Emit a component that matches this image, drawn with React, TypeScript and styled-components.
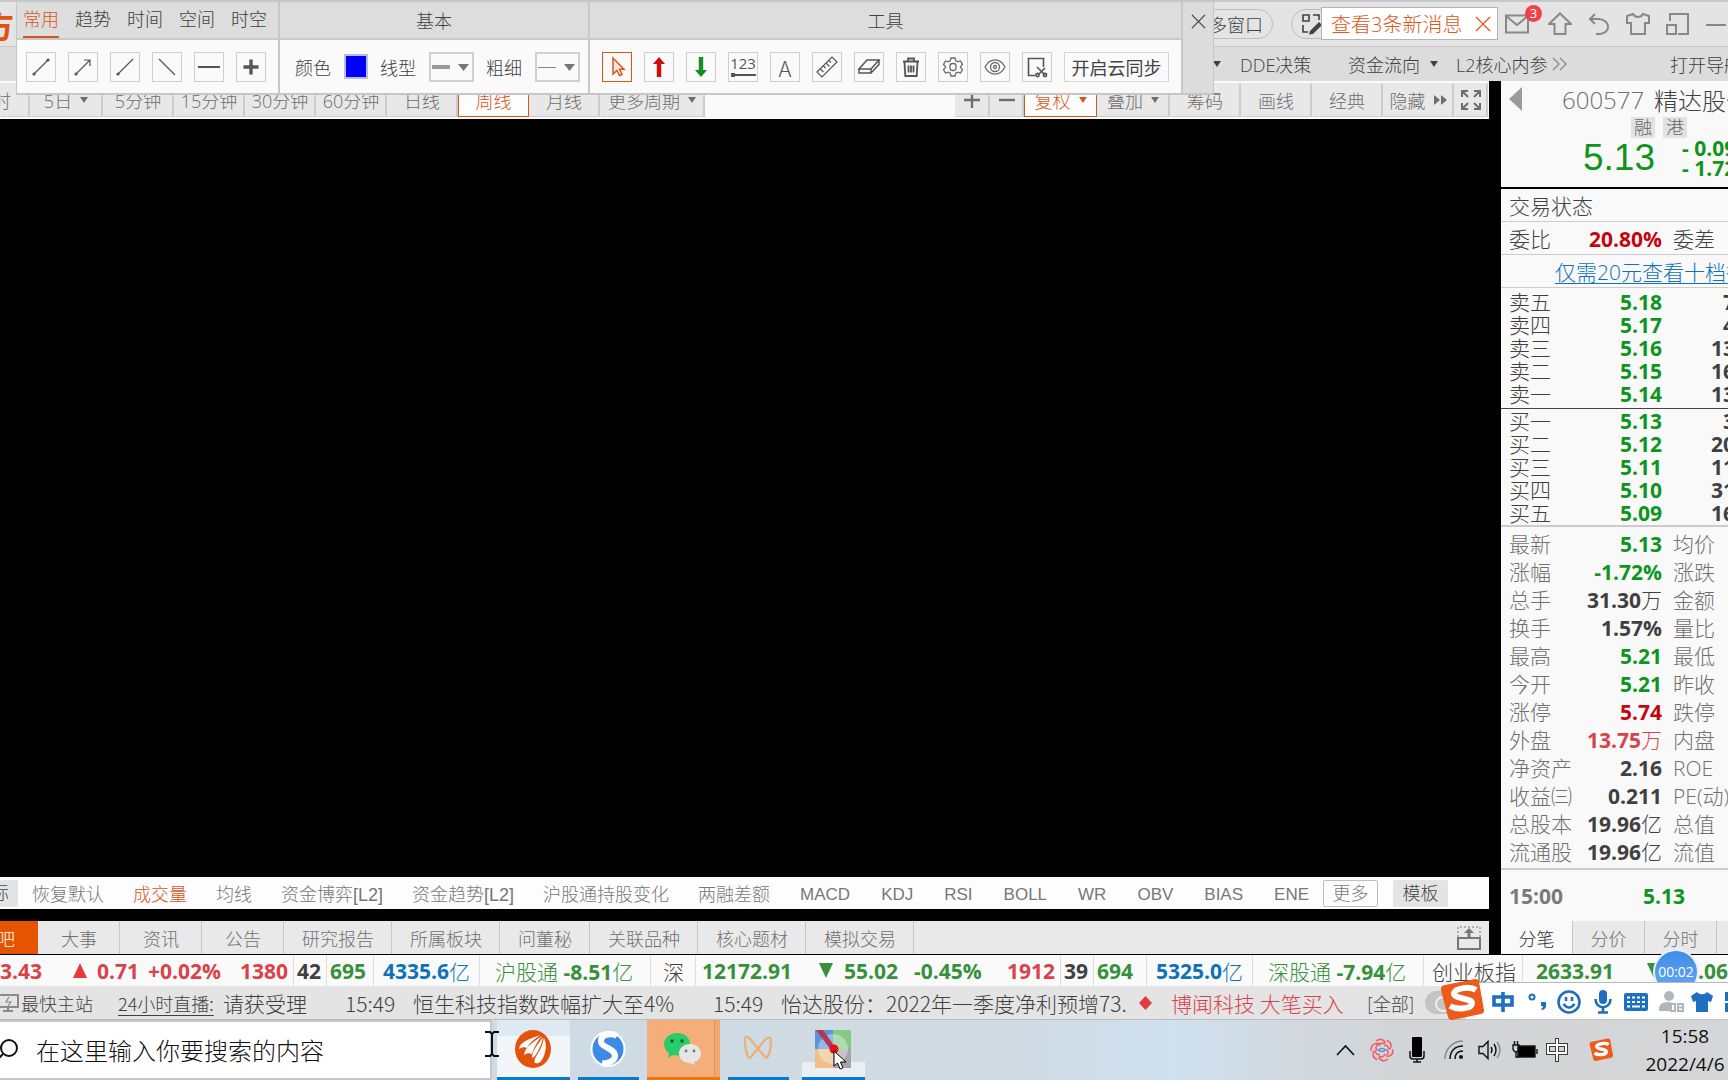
import React from "react";
import styled, { createGlobalStyle, css } from "styled-components";

const ui = '"Open Sans", "Noto Sans CJK SC", sans-serif';
const cjk = '"Noto Sans CJK SC", sans-serif';
const arial = '"Liberation Sans", "Noto Sans CJK SC", sans-serif';

const c = {
  orange: "#d4581c",
  green: "#0f9420",
  red: "#c4060f",
  softRed: "#d8434a",
  softGreen: "#37903b",
  blue: "#0f72b8",
  text: "#404040",
  muted: "#707070",
  line: "#cccccc",
  panel: "#f9f9f9",
};

const Global = createGlobalStyle`
  * { box-sizing: border-box; }
  body { margin: 0; background: #000; overflow: hidden; }
  button, input, select { font: inherit; color: inherit; margin: 0; padding: 0; border: 0; background: none; }
  button { white-space: nowrap; cursor: pointer; }
  svg { display: block; flex: none; }
  table { border-collapse: collapse; border-spacing: 0; }
  td, th { padding: 0; font-weight: inherit; text-align: left; }
`;

const Screen = styled.div`
  position: relative;
  display: flex;
  flex-direction: column;
  height: 100vh;
  overflow: hidden;
  font-family: ${ui};
  font-size: 18px;
  font-weight: 300;
  color: ${c.text};
  white-space: nowrap;
`;

/* ---------- title bar and menu ---------- */

const TitleBar = styled.header`
  display: flex;
  align-items: center;
  height: 46px;
  flex: none;
  border-top: 2px solid #c8c8c8;
  background: #e4e4e4;
  overflow: hidden;
`;
const Brand = styled.div`
  width: 14px;
  display: flex;
  justify-content: flex-end;
  font-family: ${cjk};
  font-weight: 700;
  font-size: 32px;
  line-height: 44px;
  color: #e05410;
`;
const TitleTools = styled.div`
  display: flex;
  align-items: center;
  margin-left: auto;
`;
const Pill = styled.button<{ $w: number }>`
  display: flex;
  align-items: center;
  justify-content: flex-end;
  width: ${(p) => p.$w}px;
  height: 30px;
  margin-right: 18px;
  padding: 0 9px;
  border: 1px solid #bdbdbd;
  border-radius: 15px;
`;
const LayoutPill = styled(Pill)`
  justify-content: flex-start;
  margin-right: 0;
`;
const WindowIcons = styled.div`
  display: flex;
  align-items: center;
  gap: 15px;
  margin-left: 14px;
`;
const IconButton = styled.button`
  position: relative;
  display: grid;
  place-items: center;
  width: 24px;
  height: 30px;
`;
const MailButton = styled(IconButton)`
  margin-right: 4px;
`;
const Badge = styled.span`
  position: absolute;
  left: 20px;
  top: -4px;
  width: 17px;
  height: 17px;
  border-radius: 50%;
  background: #ef4146;
  color: #fff;
  font-size: 13px;
  font-weight: 400;
  line-height: 17px;
  text-align: center;
`;
const Notice = styled.div`
  position: absolute;
  top: 7px;
  right: 230px;
  display: flex;
  align-items: center;
  justify-content: space-between;
  width: 177px;
  height: 33px;
  padding: 0 6px 0 9px;
  border: 1px solid #b4b4b4;
  background: #fff;
  color: #e0571a;
  font-size: 20px;
`;
const MenuBar = styled.nav`
  display: flex;
  align-items: center;
  justify-content: flex-end;
  height: 35px;
  flex: none;
  border-top: 1px solid #c9c9c9;
  background: #dcdcdc;
  overflow: hidden;
`;
const MenuItem = styled.a<{ $w: number }>`
  display: flex;
  align-items: center;
  gap: 10px;
  flex: none;
  width: ${(p) => p.$w}px;
  color: inherit;
  text-decoration: none;
`;
const MoreItem = styled(MenuItem)`
  gap: 4px;
`;

/* ---------- main area ---------- */

const Main = styled.main`
  display: grid;
  grid-template-columns: minmax(0, 1fr) 227px;
  column-gap: 12px;
  flex: 1;
  min-height: 0;
  background: #000;
`;
const Left = styled.section`
  display: flex;
  flex-direction: column;
  min-width: 0;
`;
const PeriodRow = styled.div`
  display: flex;
  height: 38px;
  flex: none;
  padding: 2px 1px 2px 0;
  background: #fafafa;
  overflow: hidden;
`;
const Spacer = styled.div`
  flex: 1;
`;
const Period = styled.button<{ $w: number; $on?: boolean; $cut?: boolean }>`
  display: flex;
  align-items: center;
  justify-content: ${(p) => (p.$cut ? "flex-end" : "center")};
  gap: 8px;
  width: ${(p) => p.$w}px;
  flex: none;
  padding-right: ${(p) => (p.$cut ? 17 : 0)}px;
  border: 1px solid ${(p) => (p.$on ? c.orange : "#e8e8e8")};
  border-right: ${(p) => (p.$on ? `1px solid ${c.orange}` : `2px solid ${c.line}`)};
  border-bottom-color: ${(p) => (p.$on ? c.orange : c.line)};
  background: ${(p) => (p.$on ? "#fdfdfd" : "#e8e8e8")};
  color: ${(p) => (p.$on ? c.orange : "#6e6e6e")};
`;
const Chart = styled.div`
  flex: 1;
  background: #000;
`;
const Indicators = styled.div`
  display: flex;
  align-items: center;
  gap: 29px;
  height: 32px;
  flex: none;
  margin-bottom: 12px;
  background: #fdfdfd;
  color: #777;
  overflow: hidden;
`;
const Indicator = styled.button<{ $on?: boolean; $latin?: boolean }>`
  padding: ${(p) => (p.$latin ? "3px 1px 0" : "0")};
  font-family: ${arial};
  font-size: ${(p) => (p.$latin ? 17 : 18)}px;
  color: ${(p) => (p.$on ? c.orange : "inherit")};
`;
const Chip = styled.button<{ $fill?: boolean }>`
  width: 55px;
  height: 27px;
  margin-left: ${(p) => (p.$fill ? -14 : -16)}px;
  border: 1px solid ${(p) => (p.$fill ? "#e4e4e4" : "#bdbdbd")};
  border-radius: 2px;
  background: ${(p) => (p.$fill ? "#e4e4e4" : "transparent")};
  color: ${(p) => (p.$fill ? "#444" : "inherit")};
  line-height: 25px;
`;
const CutChip = styled.button`
  display: flex;
  justify-content: flex-end;
  width: 18px;
  height: 27px;
  margin-right: -15px;
  padding-right: 9px;
  background: #e4e4e4;
  line-height: 25px;
  color: #444;
  overflow: hidden;
`;
const InfoTabs = styled.div`
  display: flex;
  align-items: center;
  height: 33px;
  flex: none;
  padding-right: 8px;
  background: #e9e9e9;
  overflow: hidden;
`;
const InfoTab = styled.button`
  min-width: 82px;
  height: 33px;
  padding: 0 17px 0 18px;
  border-right: 1px solid #c8c8c8;
  color: ${c.muted};
`;
const ActiveTab = styled.button`
  display: flex;
  justify-content: flex-end;
  align-items: center;
  width: 38px;
  height: 33px;
  padding-right: 23px;
  background: #e65400;
  color: #fff;
`;

/* ---------- quote panel ---------- */

const Panel = styled.aside`
  display: flex;
  flex-direction: column;
  min-width: 0;
  background: ${c.panel};
  font-size: 21px;
  overflow: hidden;
`;
const QuoteHead = styled.div`
  height: 108px;
  flex: none;
  padding-left: 8px;
  border-bottom: 2px solid #000;
`;
const StockLine = styled.div`
  display: flex;
  align-items: center;
  height: 36px;
  font-size: 24px;
`;
const StockCode = styled.span`
  flex: none;
  width: 92px;
  margin-left: 40px;
  color: #707070;
`;
const TagLine = styled.div`
  display: flex;
  gap: 8px;
  padding-left: 122px;
`;
const Tag = styled.span`
  width: 24px;
  height: 21px;
  background: #e2e2e2;
  color: #666;
  font-size: 18px;
  line-height: 20px;
  text-align: center;
`;
const PriceLine = styled.div`
  display: flex;
  align-items: center;
  padding-left: 74px;
  color: ${c.green};
`;
const Price = styled.span`
  flex: none;
  width: 99px;
  font-family: ${arial};
  font-size: 37px;
  font-weight: 400;
  line-height: 40px;
`;
const Change = styled.span`
  font-weight: 700;
  line-height: 20px;
`;
const PanelRow = styled.div`
  display: flex;
  height: 33px;
  flex: none;
  padding-left: 8px;
  border-bottom: 1px solid ${c.line};
  line-height: 34px;
`;
const DeepLink = styled.a`
  margin-left: 46px;
  color: ${c.blue};
  text-underline-offset: 3px;
  text-decoration-thickness: 1px;
`;
const Table = styled.table<{ $row: number }>`
  table-layout: fixed;
  width: 226px;
  flex: none;
  tr { height: ${(p) => p.$row}px; }
  th, td { line-height: ${(p) => p.$row}px; vertical-align: top; }
`;
const NameCol = styled.col`
  width: 62px;
`;
const PriceCol = styled.col`
  width: 91px;
`;
const Label = styled.th<{ $muted?: boolean }>`
  color: ${(p) => (p.$muted ? c.muted : c.text)};
`;
const Second = styled(Label)`
  && { padding-left: 11px; }
`;
const Value = styled.td<{ $tone: string }>`
  && { text-align: right; }
  color: ${(p) => p.$tone};
  font-weight: 700;
`;
const Unit = styled.span`
  font-weight: 300;
  line-height: 20px;
`;
const Block = styled.div<{ $h: number; $rule: string; $thick: number }>`
  height: ${(p) => p.$h}px;
  flex: none;
  padding: 3px 0 0 8px;
  border-bottom: ${(p) => p.$thick}px solid ${(p) => p.$rule};
`;
const BuyBlock = styled(Block)`
  padding-top: 1px;
`;
const Deal = styled.div`
  display: flex;
  align-items: center;
  flex: 1;
  padding-left: 8px;
  font-weight: 700;
  color: #7a7a7a;
`;
const DealPrice = styled.span`
  margin-left: 80px;
  color: ${c.green};
`;
const DealTabs = styled.div`
  display: flex;
  height: 33px;
  flex: none;
`;
const DealTab = styled.button<{ $on?: boolean }>`
  width: 72px;
  flex: none;
  border-right: 1px solid #c4c4c4;
  background: ${(p) => (p.$on ? c.panel : "#e9e9e9")};
  color: ${(p) => (p.$on ? "#333" : c.muted)};
  font-size: 18px;
`;

/* ---------- index ticker and news ---------- */

const Ticker = styled.div`
  display: flex;
  height: 32px;
  flex: none;
  border-top: 1px solid #000;
  background: #fafafa;
  font-size: 21px;
  overflow: hidden;
`;
const Tick = styled.span<{ $w: number; $pad?: number; $tone?: string; $rule?: boolean }>`
  display: flex;
  align-items: center;
  flex: none;
  width: ${(p) => p.$w}px;
  padding-left: ${(p) => p.$pad ?? 0}px;
  border-right: ${(p) => (p.$rule ? "1px solid #ddd" : "0")};
  color: ${(p) => p.$tone ?? c.text};
`;
const Num = styled.b`
  font-weight: 700;
`;
const News = styled.div`
  display: flex;
  align-items: center;
  height: 34px;
  flex: none;
  border-bottom: 1px solid #bbb;
  background: #e4e4e4;
  font-family: ${cjk};
  overflow: hidden;
`;
const NewsCell = styled.span<{ $w: number; $big?: boolean; $tone?: string }>`
  flex: none;
  width: ${(p) => p.$w}px;
  font-size: ${(p) => (p.$big ? 21 : 18)}px;
  color: ${(p) => p.$tone ?? c.text};
`;
const LiveLink = styled.a`
  color: inherit;
  text-underline-offset: 4px;
  text-decoration-thickness: 1px;
`;
const Toggle = styled.span`
  width: 40px;
  height: 23px;
  border-radius: 12px;
  background: #c4c4c4;
  padding: 5px 10px;
  &::before {
    content: "";
    display: block;
    width: 12px;
    height: 12px;
    border: 2px solid #eee;
    border-radius: 50%;
  }
`;

/* ---------- taskbar ---------- */

const Taskbar = styled.footer`
  display: flex;
  align-items: stretch;
  height: 60px;
  flex: none;
  background: linear-gradient(90deg, #cfdde6 0, #cfdbe4 40%, #d0dae3 58%, #cfe0ee 68%, #d2d8dd 76%, #d3d4d5 84%, #d5d6d7 100%);
  overflow: hidden;
`;
const Search = styled.label`
  display: flex;
  align-items: center;
  gap: 12px;
  width: 492px;
  flex: none;
  border: 2px solid #c4c8ca;
  border-left: 0;
  background: #fff;
  color: #222;
`;
const SearchInput = styled.input`
  flex: 1;
  min-width: 0;
  outline: 0;
  font-size: 24px;
  font-weight: 300;
  margin-left: 6px;
  &::placeholder { color: #111; opacity: 1; }
`;
const Tasks = styled.div`
  display: flex;
  gap: 8px;
  margin-left: 5px;
`;
const Task = styled.button<{ $w: number; $kind?: "light" | "hot" | "low" }>`
  display: grid;
  place-items: center;
  width: ${(p) => p.$w}px;
  padding-right: 2px;
  border-bottom: 3px solid ${(p) => (p.$kind === "hot" ? "#ec7612" : "#0b79c9")};
  ${(p) => p.$kind === "light" && css`background: linear-gradient(#dfe9f1 16px, #f2f6f9 16px);`}
  ${(p) => p.$kind === "hot" && css`background: linear-gradient(90deg, #f4ae79 67px, #d99460 67px, #d99460 68px, #f2a76e 68px);`}
  ${(p) => p.$kind === "low" && css`margin-left: 5px; background: linear-gradient(transparent 42px, #e9eff5 42px);`}
`;
const Tray = styled.div`
  display: flex;
  align-items: center;
  margin-left: auto;
  color: #111;
`;
const TrayCell = styled.button<{ $w: number }>`
  display: grid;
  place-items: center start;
  width: ${(p) => p.$w}px;
  height: 60px;
`;
const Clock = styled.div`
  width: 86px;
  font-size: 19px;
  font-weight: 400;
  line-height: 28px;
  text-align: center;
  color: #111;
`;
const TimeText = styled.div``;

/* ---------- floating drawing palette ---------- */

const Palette = styled.div`
  position: absolute;
  top: 0;
  left: 16px;
  display: flex;
  height: 95px;
  border: 1px solid #c6c6c6;
  border-top: 2px solid #c6c6c6;
  border-bottom-width: 2px;
  background: #dcdcdc;
`;
const Group = styled.section<{ $w: number }>`
  width: ${(p) => p.$w}px;
  border-right: 2px solid #c8c8c8;
`;
const GroupHead = styled.div`
  display: flex;
  justify-content: center;
  align-items: center;
  height: 38px;
  border-bottom: 2px solid #c8c8c8;
  background: #dcdddc;
`;
const PaletteTabs = styled(GroupHead)`
  justify-content: flex-start;
  gap: 16px;
  padding-left: 6px;
`;
const PaletteTab = styled.button<{ $on?: boolean }>`
  width: 36px;
  height: 36px;
  line-height: 34px;
  border-bottom: 2px solid ${(p) => (p.$on ? c.orange : "transparent")};
  color: ${(p) => (p.$on ? c.orange : c.text)};
`;
const GroupBody = styled.div<{ $gap: number; $pad: number }>`
  display: flex;
  align-items: center;
  gap: ${(p) => p.$gap}px;
  height: 53px;
  padding-left: ${(p) => p.$pad}px;
  background: #fafafa;
`;
const Tool = styled.button<{ $on?: boolean }>`
  display: grid;
  place-items: center;
  width: 30px;
  height: 30px;
  border: 1px solid ${(p) => (p.$on ? c.orange : "#cfcfcf")};
  color: #555;
`;
const SyncButton = styled.button`
  width: 105px;
  height: 30px;
  border: 1px solid #d6d6d6;
  font-weight: 400;
  color: #444;
`;
const ToolField = styled.label`
  display: flex;
  align-items: center;
  gap: 13px;
`;
const ColorInput = styled.input`
  appearance: none;
  width: 24px;
  height: 25px;
  border: 2px solid #b9bcdd;
  &::-webkit-color-swatch-wrapper { padding: 0; }
  &::-webkit-color-swatch { border: 0; border-radius: 0; }
`;
const StyleBox = styled.span`
  display: grid;
  width: 45px;
  height: 30px;
  border: 2px solid #d0d0d0;
  align-items: center;
  & > * { grid-area: 1 / 1; }
`;
const StyleSelect = styled.select`
  appearance: none;
  width: 100%;
  height: 100%;
  color: transparent;
  outline: 0;
  option { color: #333; }
`;
const CloseCell = styled.button`
  display: flex;
  justify-content: center;
  width: 30px;
  padding-top: 12px;
`;

/* ---------- other floating pieces ---------- */

const ImeBar = styled.div`
  position: absolute;
  right: 0;
  bottom: 60px;
  display: flex;
  align-items: center;
  width: 262px;
  height: 38px;
  padding: 2px 0 0 26px;
  border-top: 1px solid #b8b8b8;
  border-bottom: 1px solid #c4c4c4;
  background: #fff;
  color: #1f6fc0;
`;
const ImeCell = styled.button<{ $w: number }>`
  display: grid;
  place-items: center start;
  flex: none;
  width: ${(p) => p.$w}px;
`;
const ImeLogo = styled.div`
  position: absolute;
  left: -26px;
  top: -5px;
`;
const Timer = styled.div`
  position: absolute;
  right: 29px;
  bottom: 85px;
  width: 46px;
  height: 46px;
  border: 2px solid #e8f1fc;
  border-radius: 50%;
  background: linear-gradient(180deg, #3f8ce6, #69a8f4);
  color: #fff;
  font-size: 14px;
  font-weight: 400;
  line-height: 42px;
  text-align: center;
`;
const IBeam = styled.div`
  position: absolute;
  left: 485px;
  bottom: 23px;
`;
const Pointer = styled.div`
  position: absolute;
  left: 833px;
  bottom: 10px;
`;

/* ---------- drawings ---------- */

type DrawProps = { w?: number; h?: number; box?: string; color?: string; sw?: number; children: React.ReactNode };
const Draw = ({ w = 24, h = 24, box, color = "currentColor", sw = 2, children }: DrawProps) => (
  <svg width={w} height={h} viewBox={box ?? `0 0 ${w} ${h}`} fill="none" stroke={color} strokeWidth={sw}>
    {children}
  </svg>
);
const Caret = ({ s = 8 }: { s?: number }) => (
  <svg width={s} height={s - 2} viewBox="0 0 8 6"><path d="M0 0h8L4 6z" fill="currentColor" /></svg>
);
const Cross = ({ s = 16 }: { s?: number }) => (
  <Draw w={s} h={s} box="0 0 16 16" sw={1.3}><path d="M1 1l14 14M15 1L1 15" /></Draw>
);
const SogouS = ({ s }: { s: number }) => (
  <svg width={s} height={s} viewBox="0 0 44 44">
    <path d="M5 7L35 1q3-.5 4 3l5 28q.4 3-3 4L12 42q-3 .5-4-3L1 12q-.6-4 4-5z" fill="#ee5a1a" />
    <path d="M36 12c-6-4-20-2-22 3-1 6 18 5 18 10 0 6-15 7-22 3" fill="none" stroke="#fff" strokeWidth="6" />
  </svg>
);
const Dot = ({ x, y }: { x: number; y: number }) => <circle cx={x} cy={y} r="1.6" fill="currentColor" stroke="none" />;

const lineTools: [string, React.ReactNode][] = [
  ["线段", <Draw w={20} h={20} sw={1.2}><path d="M3 17L17 3" /><Dot x={3} y={17} /><Dot x={17} y={3} /></Draw>],
  ["箭头", <Draw w={20} h={20} sw={1.2}><path d="M3 17L17 3M11 3h6v6" /><Dot x={3} y={17} /></Draw>],
  ["射线", <Draw w={20} h={20} sw={1.2}><path d="M3 17L18 2" /><Dot x={3} y={17} /></Draw>],
  ["直线", <Draw w={20} h={20} sw={1.2}><path d="M2 2l16 16" /></Draw>],
  ["水平线", <Draw w={22} h={20}><path d="M0 10h22" /></Draw>],
  ["十字", <Draw w={20} h={20} sw={3.4}><path d="M2.500 10h15M10 2.500v15" /></Draw>],
];

const drawTools: [string, React.ReactNode][] = [
  ["选择", <Draw w={20} h={24} color={c.orange} sw={1.5}><path d="M6 3v16l4-3.500 2.500 5 2.500-1.200-2.300-5H17z" fill="#fbe6dc" /></Draw>],
  ["上箭头", <svg width="12" height="20" viewBox="0 0 12 20"><path d="M6 0l6 7H8.200v13H3.800V7H0z" fill="#d10a0a" /></svg>],
  ["下箭头", <svg width="12" height="20" viewBox="0 0 12 20"><path d="M6 20l6-7H8.200V0H3.800v13H0z" fill="#128f22" /></svg>],
  ["数字标注", null],
  ["文字", null],
  ["标尺", <Draw w={24} h={24} sw={1.2}><path d="M2 17L17 2l5 5L7 22zM5.500 14l3 3M8.500 11l2 2M11 8l3.500 3.500M14 5.500l2 2" /></Draw>],
  ["橡皮", <Draw w={24} h={24} sw={1.5}><path d="M2 14L10 5h12l-8 9zM2 14v4h12v-4M14 18l8-8.500V5" /></Draw>],
  ["删除", <Draw w={22} h={24} sw={1.8}><path d="M3 6.500h16M8 6V3.500h6V6M4.500 7l.8 14h11.400l.8-14M8.500 10.500v7M11 10.500v7M13.500 10.500v7" /></Draw>],
  ["设置", <Draw w={22} h={22} sw={1.3} color="#6a6a6a"><path d="M9 2h4l.7 2.800 2 1.100L18.500 5l2 3.500-2 2v1l2 2-2 3.500-2.800-.9-2 1.100L13 20H9l-.7-2.800-2-1.100-2.800.9-2-3.500 2-2v-1l-2-2 2-3.500 2.800.9 2-1.100z" /><rect x="8" y="7.500" width="6" height="7" rx="2.500" /></Draw>],
  ["显示", <Draw w={22} h={20} sw={1.3} color="#6a6a6a"><path d="M1 10c5-9.500 15-9.500 20 0-5 9.500-15 9.500-20 0z" /><circle cx="11" cy="10" r="4.500" /><circle cx="11" cy="10" r="1.500" /></Draw>],
  ["截图", <Draw w={22} h={22} sw={1.6}><path d="M9 19.500H2.500v-17h15V11M11 11l8 8M19 12l-7 7" /><circle cx="11.500" cy="19" r="1.600" /><circle cx="19" cy="19" r="1.600" /></Draw>],
];

const Numbering = styled.span`
  display: grid;
  justify-items: center;
  font-size: 15px;
  font-weight: 400;
  line-height: 17px;
`;
const Letter = styled.span`
  font-family: ${cjk};
  font-size: 22px;
  line-height: 28px;
`;

const periods: [string, number, boolean?, boolean?][] = [
  ["5日", 73, false, true], ["5分钟", 71], ["15分钟", 71], ["30分钟", 71], ["60分钟", 71],
  ["日线", 71], ["周线", 71, true], ["月线", 71], ["更多周期", 105, false, true],
];
const indicators = ["恢复默认", "成交量", "均线", "资金博弈[L2]", "资金趋势[L2]", "沪股通持股变化", "两融差额"];
const latin = ["MACD", "KDJ", "RSI", "BOLL", "WR", "OBV", "BIAS", "ENE"];
const infoTabs = ["大事", "资讯", "公告", "研究报告", "所属板块", "问董秘", "关联品种", "核心题材", "模拟交易"];

const sells = [["卖五", "5.18", "7"], ["卖四", "5.17", "4"], ["卖三", "5.16", "13"], ["卖二", "5.15", "16"], ["卖一", "5.14", "13"]];
const buys = [["买一", "5.13", "3"], ["买二", "5.12", "20"], ["买三", "5.11", "11"], ["买四", "5.10", "31"], ["买五", "5.09", "16"]];
const stats: [string, string, string, string, string][] = [
  ["最新", "5.13", "", c.green, "均价"],
  ["涨幅", "-1.72%", "", c.green, "涨跌"],
  ["总手", "31.30", "万", c.text, "金额"],
  ["换手", "1.57%", "", c.text, "量比"],
  ["最高", "5.21", "", c.green, "最低"],
  ["今开", "5.21", "", c.green, "昨收"],
  ["涨停", "5.74", "", c.red, "跌停"],
  ["外盘", "13.75", "万", c.softRed, "内盘"],
  ["净资产", "2.16", "", c.text, "ROE"],
  ["收益㈢", "0.211", "", c.text, "PE(动)"],
  ["总股本", "19.96", "亿", c.text, "总值"],
  ["流通股", "19.96", "亿", c.text, "流值"],
];

const Columns = () => (
  <colgroup><NameCol /><PriceCol /><col /></colgroup>
);

const Depth = ({ rows }: { rows: string[][] }) => (
  <Table $row={23}>
    <Columns />
    <tbody>
      {rows.map(([n, p, v]) => (
        <tr key={n}>
          <Label scope="row">{n}</Label>
          <Value $tone={c.green}>{p}</Value>
          <Value $tone={c.text}>{v}</Value>
        </tr>
      ))}
    </tbody>
  </Table>
);

const DrawingPalette = () => (
  <Palette>
    <Group $w={263}>
      <PaletteTabs>
        {["常用", "趋势", "时间", "空间", "时空"].map((t, i) => <PaletteTab key={t} $on={i === 0}>{t}</PaletteTab>)}
      </PaletteTabs>
      <GroupBody $gap={12} $pad={9}>
        {lineTools.map(([n, icon]) => <Tool key={n} aria-label={n}>{icon}</Tool>)}
      </GroupBody>
    </Group>
    <Group $w={310}>
      <GroupHead>基本</GroupHead>
      <GroupBody $gap={12} $pad={15}>
        <ToolField>颜色<ColorInput type="color" defaultValue="#0000ff" /></ToolField>
        <ToolField>
          线型
          <StyleBox>
            <Draw w={41} h={26}><path d="M1 13h18" stroke="#999" strokeWidth="4" /><path d="M27 10h11l-5.500 7z" fill="#777" stroke="none" /></Draw>
            <StyleSelect aria-label="线型"><option>实线</option></StyleSelect>
          </StyleBox>
        </ToolField>
        <ToolField>
          粗细
          <StyleBox>
            <Draw w={41} h={26}><path d="M1 13.500h18" stroke="#888" strokeWidth="1" /><path d="M27 10h11l-5.500 7z" fill="#777" stroke="none" /></Draw>
            <StyleSelect aria-label="粗细"><option>1</option></StyleSelect>
          </StyleBox>
        </ToolField>
      </GroupBody>
    </Group>
    <Group $w={593}>
      <GroupHead>工具</GroupHead>
      <GroupBody $gap={12} $pad={12}>
        {drawTools.map(([n, icon], i) => (
          <Tool key={n} $on={i === 0} aria-label={n}>
            {n === "数字标注" ? (
              <Numbering>
                123
                <Draw w={26} h={6}><path d="M2 3h24" /><rect x="1" y="1" width="4" height="4" fill="currentColor" stroke="none" /></Draw>
              </Numbering>
            ) : n === "文字" ? <Letter>A</Letter> : icon}
          </Tool>
        ))}
        <SyncButton>开启云同步</SyncButton>
      </GroupBody>
    </Group>
    <CloseCell aria-label="关闭工具"><Cross s={15} /></CloseCell>
  </Palette>
);

const QuotePanel = () => (
  <Panel>
    <QuoteHead>
      <StockLine>
        <svg width="13" height="24" viewBox="0 0 13 24"><path d="M13 0v24L0 12z" fill="#9b9b9b" /></svg>
        <StockCode>600577</StockCode>
        <span>精达股份</span>
      </StockLine>
      <TagLine><Tag>融</Tag><Tag>港</Tag></TagLine>
      <PriceLine>
        <Price>5.13</Price>
        <Change>- 0.09<br />- 1.72%</Change>
      </PriceLine>
    </QuoteHead>
    <PanelRow>交易状态</PanelRow>
    <PanelRow>
      <Table $row={34}>
        <Columns />
        <tbody>
          <tr>
            <Label scope="row">委比</Label>
            <Value $tone={c.red}>20.80%</Value>
            <Second>委差</Second>
          </tr>
        </tbody>
      </Table>
    </PanelRow>
    <PanelRow><DeepLink href="#depth">仅需20元查看十档行情</DeepLink></PanelRow>
    <Block $h={121} $rule="#444" $thick={1}><Depth rows={sells} /></Block>
    <BuyBlock $h={118} $rule={c.line} $thick={2}><Depth rows={buys} /></BuyBlock>
    <Block $h={343} $rule={c.line} $thick={2}>
      <Table $row={28}>
        <Columns />
        <tbody>
          {stats.map(([n, v, u, tone, second]) => (
            <tr key={n}>
              <Label scope="row" $muted>{n}</Label>
              <Value $tone={tone}>{v}{u && <Unit>{u}</Unit>}</Value>
              <Second $muted>{second}</Second>
            </tr>
          ))}
        </tbody>
      </Table>
    </Block>
    <Deal>15:00<DealPrice>5.13</DealPrice></Deal>
    <DealTabs>
      <DealTab $on>分笔</DealTab><DealTab>分价</DealTab><DealTab>分时</DealTab><DealTab aria-label="更多" />
    </DealTabs>
  </Panel>
);

const Up = () => <svg width="14" height="15" viewBox="0 0 14 15"><path d="M7 0l7 15H0z" fill="currentColor" /></svg>;
const Down = () => <svg width="14" height="15" viewBox="0 0 14 15"><path d="M7 15l7-15H0z" fill="currentColor" /></svg>;

const IndexTicker = () => (
  <Ticker>
    <Tick $w={73} $tone={c.softRed}><Num>3.43</Num></Tick>
    <Tick $w={24} $tone="#e23c40"><Up /></Tick>
    <Tick $w={51} $tone={c.softRed}><Num>0.71</Num></Tick>
    <Tick $w={92} $tone={c.softRed}><Num>+0.02%</Num></Tick>
    <Tick $w={54} $tone={c.softRed} $rule><Num>1380</Num></Tick>
    <Tick $w={33} $pad={3} $rule><Num>42</Num></Tick>
    <Tick $w={47} $pad={3} $tone={c.softGreen} $rule><Num>695</Num></Tick>
    <Tick $w={106} $pad={9} $tone={c.blue} $rule><Num>4335.6</Num>亿</Tick>
    <Tick $w={171} $pad={15} $tone={c.softGreen} $rule><span>沪股通 <Num>-8.51</Num>亿</span></Tick>
    <Tick $w={45} $pad={12} $rule>深</Tick>
    <Tick $w={123} $pad={6} $tone={c.softGreen}><Num>12172.91</Num></Tick>
    <Tick $w={25} $tone={c.softGreen}><Down /></Tick>
    <Tick $w={70} $tone={c.softGreen}><Num>55.02</Num></Tick>
    <Tick $w={93} $tone={c.softGreen}><Num>-0.45%</Num></Tick>
    <Tick $w={54} $tone={c.softRed} $rule><Num>1912</Num></Tick>
    <Tick $w={33} $pad={3} $rule><Num>39</Num></Tick>
    <Tick $w={53} $pad={3} $tone={c.softGreen} $rule><Num>694</Num></Tick>
    <Tick $w={106} $pad={9} $tone={c.blue} $rule><Num>5325.0</Num>亿</Tick>
    <Tick $w={171} $pad={15} $tone={c.softGreen} $rule><span>深股通 <Num>-7.94</Num>亿</span></Tick>
    <Tick $w={99} $pad={8} $rule>创业板指</Tick>
    <Tick $w={124} $pad={13} $tone={c.softGreen}><Num>2633.91</Num></Tick>
    <Tick $w={51} $tone={c.softGreen}><Down /></Tick>
    <Tick $w={40} $tone={c.softGreen}><Num>.06</Num></Tick>
  </Ticker>
);

export default function App() {
  return (
    <Screen>
      <Global />
      <TitleBar>
        <Brand>方</Brand>
        <TitleTools>
          <Pill $w={72}>多窗口</Pill>
          <LayoutPill $w={200} aria-label="布局">
            <Draw w={24} h={22} sw={1.6}><path d="M2 2h6v6H2zM12 2h6v5M2 12v7h5" /><path d="M9 18l9-9 3 3-9 9-4 .6z" fill="#444" stroke="none" /></Draw>
          </LayoutPill>
          <WindowIcons>
            <MailButton aria-label="邮件">
              <Draw color="#888"><path d="M1 3.500h22v17H1zM1 4l11 9L23 4" /></Draw>
              <Badge>3</Badge>
            </MailButton>
            <IconButton aria-label="主页"><Draw color="#888"><path d="M12 1.500L23 12h-5.500v10h-11V12H1z" /></Draw></IconButton>
            <IconButton aria-label="返回"><Draw color="#888"><path d="M8 2L3 7l5 5M3 7h9c12 1 12 15 0 15H9" /></Draw></IconButton>
            <IconButton aria-label="换肤"><Draw color="#888"><path d="M7 2L1 4v7h4v11h14V11h4V4l-6-2c-2 4-8 4-10 0z" /></Draw></IconButton>
            <IconButton aria-label="窗口大小"><Draw color="#888"><path d="M5 9V2h18v20H13M2 13h9v9H2z" /></Draw></IconButton>
            <IconButton aria-label="最小化"><Draw color="#888"><path d="M2 13h20" /></Draw></IconButton>
          </WindowIcons>
        </TitleTools>
      </TitleBar>
      <MenuBar>
        <MenuItem href="#more" $w={27}><Caret /></MenuItem>
        <MenuItem href="#dde" $w={108}>DDE决策</MenuItem>
        <MenuItem href="#flow" $w={108}>资金流向<Caret /></MenuItem>
        <MoreItem href="#l2" $w={214}>
          <span>L2核心内参</span>
          <Draw w={16} h={14} color="#888" sw={1.3}><path d="M1 1l6 6-6 6M8 1l6 6-6 6" /></Draw>
        </MoreItem>
        <MenuItem href="#nav" $w={58}>打开导航</MenuItem>
      </MenuBar>

      <Main>
        <Left>
          <PeriodRow>
            <Period $w={30} $cut>时</Period>
            {periods.map(([t, w, on, drop]) => <Period key={t} $w={w} $on={on}>{t}{drop && <Caret />}</Period>)}
            <Spacer />
            <Period $w={35} aria-label="放大"><Draw w={18} h={18} sw={2.4}><path d="M1 9h16M9 1v16" /></Draw></Period>
            <Period $w={34} aria-label="缩小"><Draw w={18} h={18} sw={2.4}><path d="M1 9h16" /></Draw></Period>
            <Period $w={73} $on>复权<Caret /></Period>
            <Period $w={73}>叠加<Caret /></Period>
            <Period $w={71}>筹码</Period>
            <Period $w={71}>画线</Period>
            <Period $w={71}>经典</Period>
            <Period $w={71}>隐藏<Draw w={13} h={10}><path d="M0 0l6 5-6 5zM7 0l6 5-6 5z" fill="currentColor" stroke="none" /></Draw></Period>
            <Period $w={34} aria-label="全屏">
              <Draw w={22} h={22}><path d="M2 8V2h6M14 2h6v6M20 14v6h-6M8 20H2v-6M2 2l6 6M20 2l-6 6M20 20l-6-6M2 20l6-6" /></Draw>
            </Period>
          </PeriodRow>
          <Chart />
          <Indicators>
            <CutChip>指标</CutChip>
            {indicators.map((t) => <Indicator key={t} $on={t === "成交量"}>{t}</Indicator>)}
            {latin.map((t) => <Indicator key={t} $latin>{t}</Indicator>)}
            <Chip>更多</Chip>
            <Chip $fill>模板</Chip>
          </Indicators>
          <InfoTabs>
            <ActiveTab>股吧</ActiveTab>
            {infoTabs.map((t) => <InfoTab key={t}>{t}</InfoTab>)}
            <Spacer />
            <Draw w={24} h={24} color="#777"><path d="M1 12h22v11H1z" /><path d="M1 11V1h22v10" strokeWidth="1" strokeDasharray="2 2" /><path d="M12 12V5" strokeWidth="3" /><path d="M7 7l5-5 5 5z" fill="#777" stroke="none" /></Draw>
          </InfoTabs>
        </Left>
        <QuotePanel />
      </Main>

      <IndexTicker />
      <News>
        <NewsCell $w={21}><Draw w={19} h={19} color="#8a8a8a"><path d="M-2 2h20v12H-2zM8 14v3M3 18h10" /><path d="M9 4L6 9h5l-3 4" strokeWidth="1.200" /></Draw></NewsCell>
        <NewsCell $w={97}>最快主站</NewsCell>
        <NewsCell $w={105}><LiveLink href="#live">24小时直播:</LiveLink></NewsCell>
        <NewsCell $w={122} $big>请获受理</NewsCell>
        <NewsCell $w={68} $big>15:49</NewsCell>
        <NewsCell $w={300} $big>恒生科技指数跌幅扩大至4%</NewsCell>
        <NewsCell $w={68} $big>15:49</NewsCell>
        <NewsCell $w={358} $big>怡达股份：2022年一季度净利预增73.</NewsCell>
        <NewsCell $w={32}><Draw w={13} h={14}><path d="M6.500 0L13 7l-6.500 7L0 7z" fill="#e23c40" stroke="none" /></Draw></NewsCell>
        <NewsCell $w={196} $big $tone={c.softRed}>博闻科技 大笔买入</NewsCell>
        <NewsCell $w={58}>[全部]</NewsCell>
        <Toggle />
      </News>

      <Taskbar>
        <Search>
          <Draw w={18} h={24} color="#111"><circle cx="9" cy="10" r="8" /><path d="M3 16l-5 5" /></Draw>
          <SearchInput placeholder="在这里输入你要搜索的内容" aria-label="搜索" />
        </Search>
        <Tasks>
          <Task $w={73} $kind="light" aria-label="东方财富">
            <svg width="36" height="38" viewBox="0 0 36 38">
              <ellipse cx="18" cy="19" rx="18" ry="19" fill="#e2540b" />
              <path d="M4 19C5 12 12 10 25 5 20 9 15 12 12 18c-2-1-5-1-8 1z" fill="#fff" />
              <path d="M9 25c1-8 8-12 18-19-5 6-8 11-10 18-3-1-5-1-8 1z" fill="#fff" />
              <path d="M20 33c-2-3 2-8 5-13 2-4 3-8 4-12 3 6 2 14-1 20-2 4-4 6-8 5z" fill="#fff" />
              <path d="M17 28c0-8 6-13 11-21-1 6-3 10-5 14-2 3-3 6-6 7z" fill="#fff" />
            </svg>
          </Task>
          <Task $w={61} aria-label="搜狗浏览器">
            <svg width="36" height="38" viewBox="0 0 36 38">
              <ellipse cx="18" cy="19" rx="17.500" ry="18" fill="#fff" />
              <ellipse cx="18" cy="19" rx="15.500" ry="16" fill="#3d8be6" />
              <path d="M27 6c-7-4-17-1-16 6 1 6 14 6 14 14 0 5-8 8-13 7" fill="none" stroke="#fff" strokeWidth="6" />
            </svg>
          </Task>
          <Task $w={73} $kind="hot" aria-label="微信">
            <svg width="37" height="34" viewBox="0 0 37 34">
              <path d="M13 1C6 1 0 6 0 12c0 4 2 7 5 9l-1 5 5-3c11 2 17-4 17-11S20 1 13 1z" fill="#2bcb6b" />
              <circle cx="8" cy="9" r="1.700" fill="#0b5c2c" /><circle cx="18" cy="9" r="1.700" fill="#0b5c2c" />
              <path d="M26 12c-6 0-11 4-11 9.500S20 31 26 31l5 2-1-3c4-1 7-4 7-8.500 0-5.500-5-9.500-11-9.500z" fill="#e6e6e6" />
              <circle cx="22" cy="19" r="1.400" fill="#777" /><circle cx="30" cy="19" r="1.400" fill="#777" />
            </svg>
          </Task>
          <Task $w={61} aria-label="文档">
            <Draw w={30} h={28} color="#e9b27a" sw={2.4}><path d="M2 5C1 1 5 1 8 5L22 22c3 3 6-7 6-16 0-5-4-4-7 0L8 22C5 26 2 15 2 5z" /></Draw>
          </Task>
          <Task $w={63} $kind="low" aria-label="录屏">
            <svg width="36" height="38" viewBox="0 0 36 38">
              <path d="M0 0h18v19H0z" fill="#5795dc" /><path d="M18 0h18v19H18z" fill="#84c985" /><path d="M0 19h18v19H0z" fill="#efbf87" /><path d="M18 19h18v19H18z" fill="#a6a3a9" />
              <circle cx="18" cy="19" r="15" fill="#fff" opacity=".35" />
              <path d="M1 0h7l12 17-4 3z" fill="#b93652" /><circle cx="19" cy="19" r="4.500" fill="#e3121d" />
            </svg>
          </Task>
        </Tasks>
        <Tray>
          <TrayCell $w={34} aria-label="展开"><Draw w={19} h={12} sw={1.6}><path d="M1 11l8.500-9 8.500 9" /></Draw></TrayCell>
          <TrayCell $w={39} aria-label="EV录屏">
            <svg width="24" height="24" viewBox="0 0 24 24" fill="none">
              {[0, 60, 120, 180, 240, 300].map((a) => (
                <path key={a} d="M6 3c4-3 8-2 10 3-3-1.500-6-1-7 2" stroke="#e0606a" strokeWidth="1.500" fill="#f6c4c6" transform={`rotate(${a} 12 12)`} />
              ))}
              <path d="M8 12q4-3 8 0-4 3-8 0z" stroke="#5c8fd0" strokeWidth="1.500" />
            </svg>
          </TrayCell>
          <TrayCell $w={35} aria-label="麦克风">
            <Draw w={16} h={26} sw={1.5}><rect x="3" y="0" width="10" height="20" rx="1" fill="#000" stroke="none" /><path d="M1 14v5q0 3 3 3h8q3 0 3-3v-5M8 22v3M4 25h8" /></Draw>
          </TrayCell>
          <TrayCell $w={34} aria-label="网络">
            <Draw w={20} h={20} sw={1.5}><path d="M1 19C1 9 9 1 19 1" stroke="#888" /><path d="M6 19C6 11 11 6 19 6M11 19c0-5 3-8 8-8" /><circle cx="17" cy="17" r="2" fill="#111" stroke="none" /></Draw>
          </TrayCell>
          <TrayCell $w={34} aria-label="音量">
            <Draw w={24} h={22} sw={1.4}><path d="M1 7.500h4l5-5v17l-5-5H1zM13 8q2 3 0 6M16 5q4 6 0 12" /><path d="M19 3q6 8 0 16" stroke="#888" /></Draw>
          </TrayCell>
          <TrayCell $w={34} aria-label="电池">
            <Draw w={26} h={18} sw={1.4}><rect x="6" y="5" width="17" height="11" fill="#000" /><path d="M25 8v5M1 4h6v4q-1 3-3 3t-3-3zM2.500 0v4M5.500 0v4M4 11v5h3" /></Draw>
          </TrayCell>
          <TrayCell $w={43} aria-label="中文输入">
            <Draw w={22} h={24}>
              <path d="M2 7h18v8H2zM11 1v22" stroke="#3c3c3c" strokeWidth="4" strokeLinecap="square" />
              <path d="M2 7h18v8H2zM11 1v22" stroke="#fff" strokeWidth="2" />
            </Draw>
          </TrayCell>
          <TrayCell $w={53} aria-label="搜狗输入法"><SogouS s={24} /></TrayCell>
          <Clock><TimeText>15:58</TimeText><TimeText>2022/4/6</TimeText></Clock>
        </Tray>
      </Taskbar>

      <Notice>查看3条新消息<Cross /></Notice>
      <DrawingPalette />
      <Timer>00:02</Timer>
      <ImeBar>
        <ImeLogo><SogouS s={44} /></ImeLogo>
        <ImeCell $w={36} aria-label="中文"><Draw w={22} h={22} sw={3.6}><path d="M2 6h18v8H2zM11 1v20" /></Draw></ImeCell>
        <ImeCell $w={29} aria-label="标点"><Draw w={20} h={20}><circle cx="4" cy="5" r="2.500" /><path d="M13 10h5v4q0 3-4 4l-1-1q2-1 2-3h-2z" fill="currentColor" stroke="none" /></Draw></ImeCell>
        <ImeCell $w={37} aria-label="表情"><Draw w={24} h={24} sw={2.6}><circle cx="12" cy="12" r="10.500" /><path d="M6.500 14q5.500 7 11 0" /><path d="M9 7v4M15 7v4" /></Draw></ImeCell>
        <ImeCell $w={30} aria-label="语音"><Draw w={18} h={24} sw={2.6}><rect x="5" y="0" width="8" height="14" rx="4" fill="currentColor" stroke="none" /><path d="M1.500 9c0 11 15 11 15 0M9 18v4M4 22.500h10" /></Draw></ImeCell>
        <ImeCell $w={35} aria-label="键盘"><Draw w={24} h={20}><rect x="0" y="1" width="24" height="18" rx="2" fill="currentColor" stroke="none" /><path d="M3 5.500h18M3 10h18" stroke="#fff" strokeDasharray="3 2" /><path d="M3 14.500h3M8 14.500h8M18 14.500h3" stroke="#fff" /></Draw></ImeCell>
        <ImeCell $w={32} aria-label="账号">
          <Draw w={26} h={24} color="#b0b6be"><circle cx="10" cy="6" r="5" fill="#b0b6be" stroke="none" /><path d="M0 19q0-7 9-7 5 0 5 3v6H0z" fill="#b0b6be" stroke="none" /><path d="M12 14h4v7h-4zM19 14h5v7h-5zM19 17.500h5" fill="#fff" /></Draw>
        </ImeCell>
        <ImeCell $w={34} aria-label="皮肤"><Draw w={22} h={22}><path d="M6 1L0 5l2 6 3-1v11h12V10l3 1 2-6-6-4c-2 3-8 3-10 0z" fill="currentColor" stroke="none" /></Draw></ImeCell>
        <ImeCell $w={20} aria-label="工具箱"><Draw w={20} h={22}><path d="M0 1h9v9H0zM0 12h9v9H0z" fill="currentColor" stroke="none" /></Draw></ImeCell>
      </ImeBar>
      <IBeam><Draw w={14} h={26} color="#111"><path d="M0 1h5l2 2 2-2h5M7 3v20M0 25h5l2-2 2 2h5" /></Draw></IBeam>
      <Pointer>
        <svg width="14" height="20" viewBox="0 0 14 20"><path d="M1 1v15l3.500-3 2.500 6 3-1.200-2.500-5.800H13z" fill="#fff" stroke="#000" /></svg>
      </Pointer>
    </Screen>
  );
}
